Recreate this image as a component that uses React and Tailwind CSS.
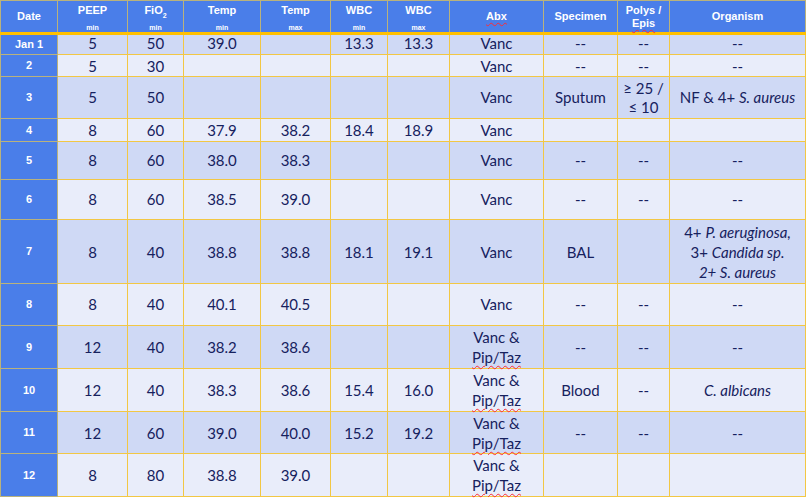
import React from "react";

const cols = [57, 70, 56, 77, 70, 57, 62, 94, 74, 52, 136];

const squiggle = "underline decoration-wavy decoration-red-500 decoration-1 underline-offset-2";

const heads = [
  { t: "Date" },
  { t: "PEEP", s: "min" },
  { t: <>FiO<sub className="text-[7px] align-[-2px]">2</sub></>, s: "min" },
  { t: "Temp", s: "min" },
  { t: "Temp", s: "max" },
  { t: "WBC", s: "min" },
  { t: "WBC", s: "max" },
  { t: <span className={squiggle}>Abx</span> },
  { t: "Specimen" },
  { t: <>Polys /<br /><span className={squiggle}>Epis</span></> },
  { t: "Organism" },
];

const PT = (
  <>
    Vanc &amp;
    <br />
    <span className={squiggle}>Pip/Taz</span>
  </>
);

// lh = line height used for the row's text
const rows = [
  { h: 21, lh: 17, top: true, c: ["Jan 1", "5", "50", "39.0", "", "13.3", "13.3", "Vanc", "--", "--", "--"] },
  { h: 22, lh: 18, c: ["2", "5", "30", "", "", "", "", "Vanc", "--", "--", "--"] },
  {
    h: 42,
    lh: 19,
    c: [
      "3", "5", "50", "", "", "", "", "Vanc", "Sputum",
      <>≥ 25 /<br />≤ 10</>,
      <>NF &amp; 4+ <i>S. aureus</i></>,
    ],
  },
  { h: 23, lh: 19, c: ["4", "8", "60", "37.9", "38.2", "18.4", "18.9", "Vanc", "", "", ""] },
  { h: 38, lh: 19, c: ["5", "8", "60", "38.0", "38.3", "", "", "Vanc", "--", "--", "--"] },
  { h: 40, lh: 19, c: ["6", "8", "60", "38.5", "39.0", "", "", "Vanc", "--", "--", "--"] },
  {
    h: 64,
    lh: 20,
    c: [
      "7", "8", "40", "38.8", "38.8", "18.1", "19.1", "Vanc", "BAL", "",
      <>
        4+ <i>P. aeruginosa,</i>
        <br />
        3+ <i>Candida sp.</i>
        <br />
        <i>2+ S. aureus</i>
      </>,
    ],
  },
  { h: 42, lh: 19, c: ["8", "8", "40", "40.1", "40.5", "", "", "Vanc", "--", "--", "--"] },
  { h: 43, lh: 20, c: ["9", "12", "40", "38.2", "38.6", "", "", PT, "--", "--", "--"] },
  { h: 43, lh: 20, c: ["10", "12", "40", "38.3", "38.6", "15.4", "16.0", PT, "Blood", "--", <i>C. albicans</i>] },
  { h: 42, lh: 20, c: ["11", "12", "60", "39.0", "40.0", "15.2", "19.2", PT, "--", "--", "--"] },
  { h: 43, lh: 20, c: ["12", "8", "80", "38.8", "39.0", "", "", PT, "", "", ""] },
];

export default function App() {
  return (
    <div className="w-[807px] h-[498px] bg-white overflow-hidden">
      <table
        className="table-fixed border-collapse w-[805px]"
        style={{ fontFamily: "Lato, 'Open Sans', sans-serif" }}
      >
        <colgroup>
          {cols.map((w, i) => (
            <col key={i} style={{ width: w }} />
          ))}
        </colgroup>
        <thead>
          <tr className="h-[32px] bg-[#4a7ee9]">
            {heads.map((hd, i) => (
              <th
                key={i}
                className="border border-[#b9b27c] border-b-[3px] border-b-[#ffc000] p-0 text-white font-bold text-[11px] leading-[13px] align-middle font-['Liberation_Sans',Arial,sans-serif]"
              >
                {hd.s ? (
                  <div className="flex flex-col items-center justify-between h-[31px] pt-[3px]">
                    <span>{hd.t}</span>
                    <span className="text-[7px] leading-[8px]">{hd.s}</span>
                  </div>
                ) : (
                  <div className="flex items-center justify-center h-[31px]">
                    <span>{hd.t}</span>
                  </div>
                )}
              </th>
            ))}
          </tr>
        </thead>
        <tbody>
          {rows.map((r, ri) => (
            <tr key={ri} style={{ height: r.h }} className={ri % 2 === 0 ? "bg-[#cfd9f5]" : "bg-[#e9edfa]"}>
              {r.c.map((v, ci) =>
                ci === 0 ? (
                  <td
                    key={ci}
                    className="border border-[#b9b27c] bg-[#4a7ee9] text-white font-bold text-[11px] leading-[13px] text-center p-0 align-middle font-['Liberation_Sans',Arial,sans-serif]"
                  >
                    {v}
                  </td>
                ) : (
                  <td
                    key={ci}
                    className={`border border-[#f2c744] text-[#16215e] text-[15px] text-center p-0 ${
                      r.top ? "align-top" : "align-middle"
                    }`}
                    style={{ lineHeight: `${r.lh}px` }}
                  >
                    {v}
                  </td>
                )
              )}
            </tr>
          ))}
        </tbody>
      </table>
    </div>
  );
}
